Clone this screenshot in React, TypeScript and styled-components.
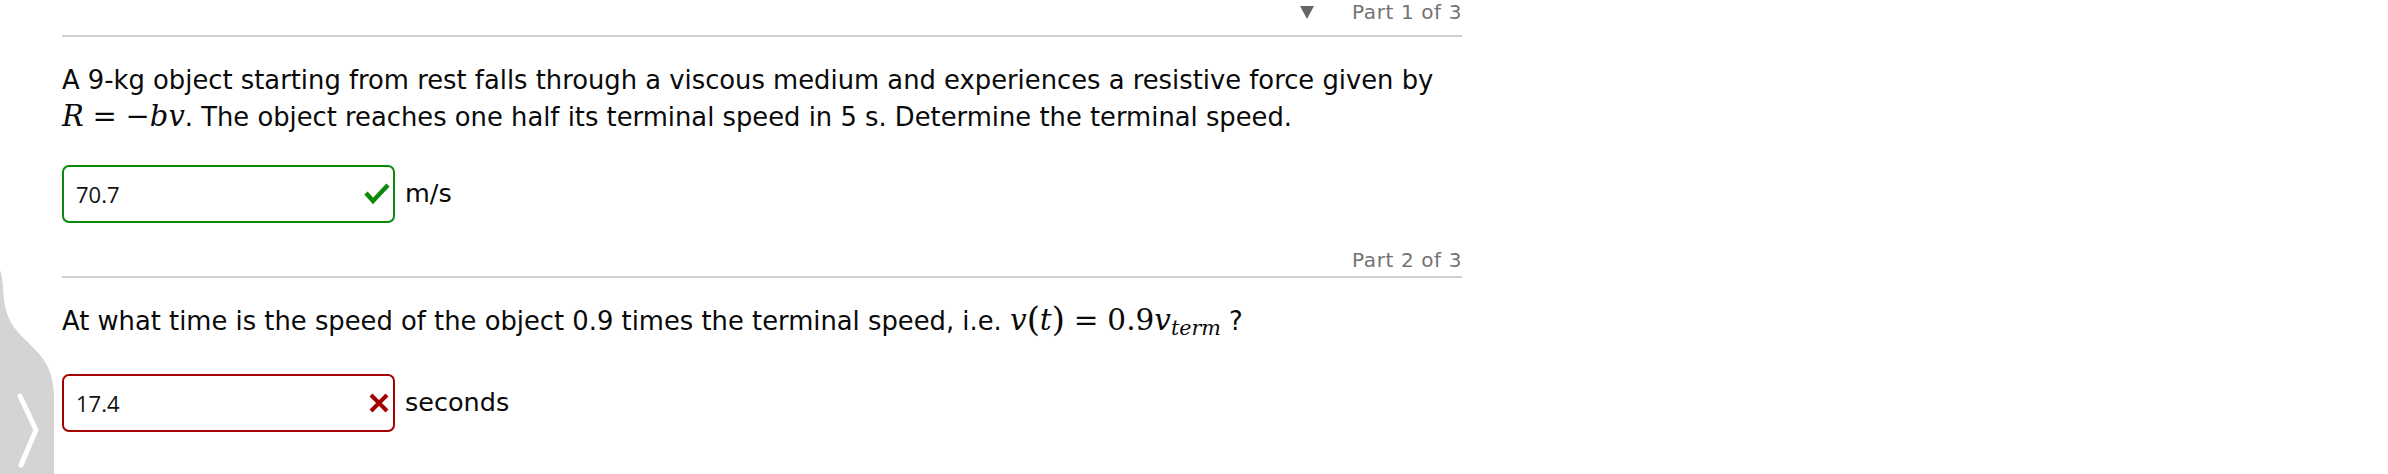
import React from 'react';
import styled, { createGlobalStyle } from 'styled-components';

const GlobalStyle = createGlobalStyle`
  html, body {
    margin: 0;
    padding: 0;
    background: #ffffff;
  }
  body {
    font-family: "DejaVu Sans", Verdana, sans-serif;
    color: #0a0a0a;
    overflow: hidden;
  }
`;

const colors = {
  rule: '#cfcfcf',
  muted: '#737373',
  correct: '#0a8a0a',
  wrong: '#a30000',
  tab: '#d4d4d4',
};

const Page = styled.div`
  position: relative;
  height: 474px;
  padding-left: 62px;
`;

const Column = styled.div`
  width: 1400px;
`;

const PartSection = styled.section`
  margin-bottom: 25px;
`;

const PartHeader = styled.div<{ $pad: number }>`
  display: flex;
  justify-content: flex-end;
  align-items: center;
  gap: 38px;
  padding-bottom: ${(p) => p.$pad}px;
  border-bottom: 2px solid ${colors.rule};
  font-size: 20px;
  letter-spacing: 0.6px;
  line-height: 24px;
  color: ${colors.muted};
`;

const Toggle = styled.button`
  display: flex;
  align-items: center;
  padding: 0;
  border: 0;
  background: none;
  cursor: pointer;
`;

const Question = styled.p<{ $after: number }>`
  margin: 25px 0 ${(p) => p.$after}px;
  font-size: 25.8px;
  line-height: 37px;
`;

const MathExpr = styled.span<{ $size: number }>`
  font-family: "DejaVu Serif", "Liberation Serif", serif;
  font-size: ${(p) => p.$size}px;
  line-height: 1;
  white-space: nowrap;
`;

const Var = styled.i`
  font-style: italic;
`;

const Op = styled.span`
  margin: 0 0.3em;
`;

const Paren = styled.span`
  display: inline-block;
  font-size: 1.15em;
  line-height: 0;
  transform: translateY(0.04em);
`;

const Sub = styled.sub`
  font-size: 0.7em;
  font-style: italic;
  line-height: 0;
  vertical-align: -0.22em;
`;

const AnswerRow = styled.div`
  display: flex;
  align-items: center;
  gap: 10px;
`;

const Field = styled.div<{ $ok: boolean }>`
  box-sizing: border-box;
  width: 333px;
  height: 58px;
  display: flex;
  align-items: center;
  padding: 0 3px 0 12px;
  border: 2px solid ${(p) => (p.$ok ? colors.correct : colors.wrong)};
  border-radius: 7px;
  background: #ffffff;
`;

const FieldInput = styled.input`
  flex: 1;
  min-width: 0;
  padding: 0;
  border: 0;
  outline: 0;
  background: transparent;
  font-family: "Open Sans", "Noto Sans", sans-serif;
  font-size: 22px;
  color: #111111;
`;

const Unit = styled.span`
  font-size: 25.5px;
  line-height: 1;
`;

const SideTab = styled.div`
  position: absolute;
  left: 0;
  top: 270px;
  width: 56px;
  height: 204px;
`;

function Triangle() {
  return (
    <svg width="14" height="13" viewBox="0 0 14 13">
      <polygon points="0,0 14,0 7,13" fill="#666" />
    </svg>
  );
}

function Check() {
  return (
    <svg width="26" height="22" viewBox="0 0 26 22">
      <polyline
        points="2,10 9,18 24,2"
        fill="none"
        stroke={colors.correct}
        strokeWidth="4.5"
      />
    </svg>
  );
}

function Cross() {
  return (
    <svg width="22" height="20" viewBox="0 0 22 20">
      <path d="M3 2 L19 18 M19 2 L3 18" stroke={colors.wrong} strokeWidth="4" />
    </svg>
  );
}

interface AnswerProps {
  value: string;
  ok: boolean;
  unit: string;
}

function Answer({ value, ok, unit }: AnswerProps) {
  return (
    <AnswerRow>
      <Field $ok={ok}>
        <FieldInput readOnly defaultValue={value} />
        {ok ? <Check /> : <Cross />}
      </Field>
      <Unit>{unit}</Unit>
    </AnswerRow>
  );
}

export default function App() {
  return (
    <>
      <GlobalStyle />
      <Page>
        <Column>
          <PartSection>
            <PartHeader $pad={11}>
              <Toggle aria-label="collapse">
                <Triangle />
              </Toggle>
              <span>Part 1 of 3</span>
            </PartHeader>
            <Question $after={29}>
              A 9-kg object starting from rest falls through a viscous medium and experiences a
              resistive force given by
              <br />
              <MathExpr $size={29}>
                <Var>R</Var>
                <Op>=</Op>−<Var>bv</Var>
              </MathExpr>
              . The object reaches one half its terminal speed in 5 s. Determine the terminal speed.
            </Question>
            <Answer value="70.7" ok unit="m/s" />
          </PartSection>

          <PartSection>
            <PartHeader $pad={4}>
              <span>Part 2 of 3</span>
            </PartHeader>
            <Question $after={34}>
              At what time is the speed of the object 0.9 times the terminal speed, i.e.{' '}
              <MathExpr $size={29.5}>
                <Var>v</Var>
                <Paren>(</Paren>
                <Var>t</Var>
                <Paren>)</Paren>
                <Op>=</Op>0.9<Var>v</Var>
                <Sub>term</Sub>
              </MathExpr>{' '}
              ?
            </Question>
            <Answer value="17.4" ok={false} unit="seconds" />
          </PartSection>
        </Column>

        <SideTab>
          <svg width="56" height="204" viewBox="0 0 56 204">
            <path
              d="M0 0 C4 10 2 25 6 40 C12 62 28 70 40 85 C50 97 54 110 54 130 L54 204 L0 204 Z"
              fill={colors.tab}
            />
            <polyline
              points="20,126 36,160 21,195"
              fill="none"
              stroke="#ffffff"
              strokeWidth="5"
              strokeLinecap="round"
              strokeLinejoin="round"
            />
          </svg>
        </SideTab>
      </Page>
    </>
  );
}
